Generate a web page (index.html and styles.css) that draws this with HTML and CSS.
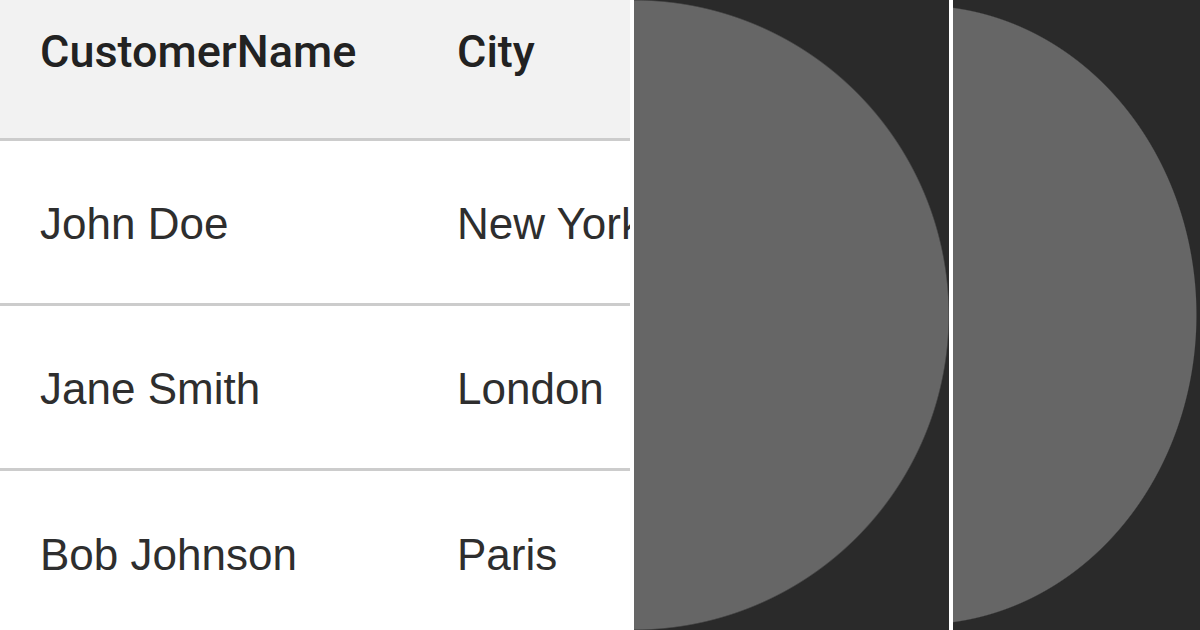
FILE: index.html
```html
<!DOCTYPE html>
<html lang="en">
<head>
<meta charset="utf-8">
<title>Customers</title>
<link rel="stylesheet" href="styles.css">
</head>
<body>
<main class="page">
  <section class="data">
    <div class="table">
      <div class="row head">
        <div class="cell">CustomerName</div>
        <div class="cell">City</div>
      </div>
      <div class="row">
        <div class="cell">John Doe</div>
        <div class="cell">New York</div>
      </div>
      <div class="row">
        <div class="cell">Jane Smith</div>
        <div class="cell">London</div>
      </div>
      <div class="row last">
        <div class="cell">Bob Johnson</div>
        <div class="cell">Paris</div>
      </div>
    </div>
  </section>
  <div class="panel panel-a"></div>
  <div class="divider"></div>
  <div class="panel panel-b"></div>
</main>
</body>
</html>
```

FILE: styles.css
```css
* { box-sizing: border-box; }

html, body {
  margin: 0;
  padding: 0;
  background: #ffffff;
}

.page {
  display: flex;
  width: 1200px;
  height: 630px;
  overflow: hidden;
}

.data {
  width: 634px;
  flex: 0 0 634px;
  background: #ffffff;
}

.table {
  width: 630px;
  overflow: hidden;
  font-family: "Liberation Sans", Arial, sans-serif;
  font-size: 44px;
  color: #2e2e2e;
}

.row {
  display: grid;
  grid-template-columns: 417px 213px;
  height: 165px;
  align-items: center;
  padding-top: 4px;
  border-bottom: 3px solid #cccccc;
}

.row.last {
  border-bottom: none;
}

.row.head {
  height: 141px;
  align-items: start;
  padding-top: 26px;
  background: #f2f2f2;
  font-family: Roboto, "Liberation Sans", Arial, sans-serif;
  font-weight: 500;
  font-size: 45px;
  color: #222222;
}

.cell {
  padding-left: 40px;
  white-space: nowrap;
  line-height: 1.15;
}

.panel {
  height: 630px;
  background: #2a2a2a;
}

.panel-a {
  flex: 0 0 315px;
  background: radial-gradient(circle 315px at 0 50%, #666666 314px, #2a2a2a 315.5px);
}

.divider {
  flex: 0 0 4px;
  background: #ffffff;
}

.panel-b {
  flex: 1 1 auto;
  background: radial-gradient(ellipse 277px 310px at -33px 50%, #666666 99.6%, #2a2a2a 100%);
}
```
